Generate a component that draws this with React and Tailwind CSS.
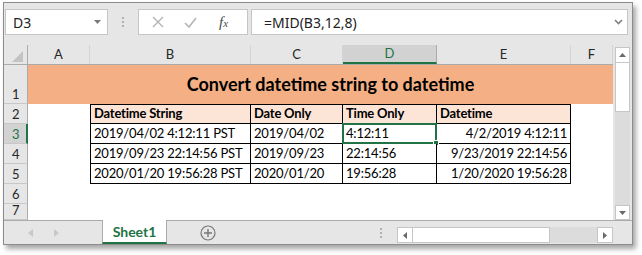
import React from 'react';

const cellFont = "font-['Lato','Liberation_Sans',sans-serif]";
const uiFont = "font-['Noto_Sans','Open_Sans',sans-serif]";
const txt = 'text-[13px] tracking-[-0.2px] whitespace-nowrap';

const cols = [
  { key: 'A', w: 'w-[62px]' },
  { key: 'B', w: 'w-[161px]' },
  { key: 'C', w: 'w-[92px]' },
  { key: 'D', w: 'w-[94px]' },
  { key: 'E', w: 'w-[134px]' },
  { key: 'F', w: 'w-[42px]' },
];

const rows = [
  ['2019/04/02 4:12:11 PST', '2019/04/02', '4:12:11', '4/2/2019 4:12:11'],
  ['2019/09/23 22:14:56 PST', '2019/09/23', '22:14:56', '9/23/2019 22:14:56'],
  ['2020/01/20 19:56:28 PST', '2020/01/20', '19:56:28', '1/20/2020 19:56:28'],
];

function RowHeader({ n, h, active }) {
  return (
    <div
      className={`w-[24px] shrink-0 ${h} border-b border-[#c8c8c8] flex items-end pl-[8px] pb-[2px] text-[13px] leading-none ${cellFont} ${
        active ? 'bg-[#d2d2d2] text-[#217346] border-r-2 border-r-[#217346]' : 'border-r border-r-[#ababab] text-[#262626]'
      }`}
    >
      {n}
    </div>
  );
}

function DataRow({ r, i }) {
  const selected = i === 0;
  return (
    <div className="flex h-[20px]">
      <RowHeader n={i + 3} h="h-[20px]" active={selected} />
      <div className="w-[62px] shrink-0 bg-white" />
      <div className={`w-[161px] shrink-0 bg-white border-l border-r border-b border-black pl-[3px] flex items-center text-black ${txt} ${cellFont}`}>
        {r[0]}
      </div>
      <div className={`w-[92px] shrink-0 bg-white border-r border-b border-black pl-[3px] flex items-center text-black ${txt} ${cellFont}`}>
        {r[1]}
      </div>
      <div className={`relative w-[94px] shrink-0 bg-white border-r border-b border-black pl-[3px] flex items-center text-black ${txt} ${cellFont}`}>
        {r[2]}
        {selected && (
          <>
            <div className="absolute -left-[1px] -top-[1px] -right-[1px] -bottom-[1px] border-2 border-[#217346]" />
            <div className="absolute -right-[3px] -bottom-[3px] w-[6px] h-[6px] bg-[#217346] border border-white" />
          </>
        )}
      </div>
      <div className={`w-[134px] shrink-0 bg-white border-r border-b border-black pr-[3px] flex items-center justify-end text-black ${txt} ${cellFont}`}>
        {r[3]}
      </div>
      <div className="w-[42px] shrink-0 bg-white" />
    </div>
  );
}

function EmptyRow({ n, h }) {
  return (
    <div className={`flex ${h} shrink-0`}>
      <RowHeader n={n} h={h} />
      <div className="w-[585px] bg-white" />
    </div>
  );
}

export default function App() {
  return (
    <div className="w-[642px] h-[255px] bg-white pl-[3px] pt-[2px]">
      <div className="w-[630px] h-[243px] border border-[#8c8c8c] bg-[#e6e6e6] shadow-[3px_4px_5px_rgba(0,0,0,0.35)] flex flex-col">
        {/* formula bar */}
        <div className="h-[42px] flex items-start pt-[6px] pl-[1px] shrink-0">
          <div className={`w-[103px] h-[26px] bg-white border border-[#c6c6c6] flex items-center justify-between pl-[7px] pr-[6px] text-[14px] text-[#222] ${uiFont}`}>
            D3
            <svg width="7" height="4" viewBox="0 0 7 4"><path d="M0 0h7L3.5 4z" fill="#7a7a7a" /></svg>
          </div>
          <div className="w-[30px] h-[26px] flex flex-col items-center justify-center gap-[2px]">
            <div className="w-[2px] h-[2px] bg-[#b0b0b0]" />
            <div className="w-[2px] h-[2px] bg-[#b0b0b0]" />
            <div className="w-[2px] h-[2px] bg-[#b0b0b0]" />
          </div>
          <div className="w-[110px] h-[26px] bg-white border border-[#c6c6c6] flex items-center pl-[13px]">
            <svg width="12" height="12" viewBox="0 0 12 12">
              <path d="M1 1l10 10M11 1L1 11" stroke="#b4b4b4" strokeWidth="1.4" />
            </svg>
            <svg className="ml-[20px]" width="13" height="11" viewBox="0 0 13 11">
              <path d="M1 6l4 4 7-9" stroke="#b4b4b4" strokeWidth="1.6" fill="none" />
            </svg>
            <span className="ml-[22px] font-['Liberation_Serif',serif] italic text-[15px] text-[#4a4a4a] leading-none">
              f<span className="text-[11px]">x</span>
            </span>
          </div>
          <div className={`ml-[3px] w-[377px] h-[26px] bg-white border border-[#c6c6c6] flex items-center justify-between pl-[12px] pr-[4px] text-[14px] text-[#222] ${uiFont}`}>
            =MID(B3,12,8)
            <svg width="9" height="6" viewBox="0 0 9 6">
              <path d="M1 1l3.5 3.5L8 1" stroke="#808080" strokeWidth="1.6" fill="none" />
            </svg>
          </div>
        </div>

        {/* grid + vertical scrollbar */}
        <div className="h-[175px] flex shrink-0">
          <div className="w-[609px] flex flex-col overflow-hidden">
            {/* column headers */}
            <div className="flex h-[20px] shrink-0 border-b border-[#ababab]">
              <div className="w-[24px] shrink-0 border-r border-[#ababab] flex items-end justify-end pr-[4px] pb-[2px]">
                <svg width="11" height="11" viewBox="0 0 11 11"><path d="M11 0v11H0z" fill="#c3c3c3" /></svg>
              </div>
              {cols.map(c => (
                <div
                  key={c.key}
                  className={`${c.w} shrink-0 flex items-center justify-center text-[13px] ${cellFont} ${
                    c.key === 'D'
                      ? 'bg-[#d2d2d2] text-[#217346] border-b-2 border-[#217346] border-r border-r-[#ababab]'
                      : 'text-[#262626] border-r border-[#d4d4d4]'
                  }`}
                >
                  {c.key}
                </div>
              ))}
            </div>

            {/* row 1: title */}
            <div className="flex h-[39px] shrink-0">
              <RowHeader n={1} h="h-[39px]" />
              <div className={`w-[585px] bg-[#f4b084] flex items-center justify-center pl-[20px] text-[18px] font-bold text-black whitespace-nowrap ${cellFont}`}>
                Convert datetime string to datetime
              </div>
            </div>

            {/* row 2: table header */}
            <div className="flex h-[20px] shrink-0">
              <RowHeader n={2} h="h-[20px]" />
              <div className="w-[62px] shrink-0 bg-white" />
              {[
                ['Datetime String', 'w-[161px] border-l'],
                ['Date Only', 'w-[92px]'],
                ['Time Only', 'w-[94px]'],
                ['Datetime', 'w-[134px]'],
              ].map(([t, w]) => (
                <div
                  key={t}
                  className={`${w} shrink-0 bg-[#fce4d6] border-t border-r border-b border-black pl-[3px] flex items-center font-bold text-black ${txt} ${cellFont}`}
                >
                  {t}
                </div>
              ))}
              <div className="w-[42px] shrink-0 bg-white" />
            </div>

            {rows.map((r, i) => (
              <DataRow key={i} r={r} i={i} />
            ))}
            <EmptyRow n={6} h="h-[20px]" />
            <EmptyRow n={7} h="h-[16px]" />
          </div>

          {/* vertical scrollbar */}
          <div className="w-[19px] pl-[2px] pr-[2px] flex flex-col bg-[#e6e6e6]">
            <div className="mt-[2px] h-[16px] bg-white border border-[#c6c6c6] flex items-center justify-center">
              <svg width="7" height="4" viewBox="0 0 7 4"><path d="M0 4h7L3.5 0z" fill="#6a6a6a" /></svg>
            </div>
            <div className="h-[49px] bg-white border border-[#c6c6c6] border-t-0" />
            <div className="flex-1 bg-[#dcdcdc]" />
            <div className="h-[15px] bg-white border border-[#c6c6c6] flex items-center justify-center">
              <svg width="7" height="4" viewBox="0 0 7 4"><path d="M0 0h7L3.5 4z" fill="#6a6a6a" /></svg>
            </div>
          </div>
        </div>

        {/* sheet tabs */}
        <div className="h-[24px] border-t border-[#ababab] flex items-start shrink-0">
          <div className="w-[98px] h-full flex items-center pl-[24px] gap-[21px]">
            <svg width="5" height="8" viewBox="0 0 5 8"><path d="M5 0v8L0 4z" fill="#c8c8c8" /></svg>
            <svg width="5" height="8" viewBox="0 0 5 8"><path d="M0 0v8l5-4z" fill="#c8c8c8" /></svg>
          </div>
          <div className={`-mt-[1px] w-[65px] h-[24px] bg-white border-l border-r border-[#ababab] border-b-2 border-b-[#217346] flex items-center justify-center text-[14px] font-bold text-[#217346] ${cellFont}`}>
            Sheet1
          </div>
          <div className="ml-[33px] h-full flex items-center">
            <svg width="16" height="16" viewBox="0 0 16 16">
              <circle cx="8" cy="8" r="7" stroke="#777" strokeWidth="1.2" fill="none" />
              <path d="M8 4v8M4 8h8" stroke="#777" strokeWidth="1.4" />
            </svg>
          </div>
          <div className="ml-[164px] h-full flex flex-col items-center justify-center gap-[2px]">
            <div className="w-[2px] h-[2px] bg-[#b0b0b0]" />
            <div className="w-[2px] h-[2px] bg-[#b0b0b0]" />
            <div className="w-[2px] h-[2px] bg-[#b0b0b0]" />
          </div>
          <div className="ml-[15px] mt-[6px] h-[16px] flex">
            <div className="w-[16px] h-[16px] bg-white border border-[#c6c6c6] flex items-center justify-center">
              <svg width="4" height="7" viewBox="0 0 4 7"><path d="M4 0v7L0 3.5z" fill="#6a6a6a" /></svg>
            </div>
            <div className="w-[137px] h-[16px] bg-white border border-[#c6c6c6] border-l-0" />
            <div className="w-[47px] h-[16px] bg-[#dcdcdc]" />
            <div className="w-[16px] h-[16px] bg-white border border-[#c6c6c6] flex items-center justify-center">
              <svg width="4" height="7" viewBox="0 0 4 7"><path d="M0 0v7l4-3.5z" fill="#6a6a6a" /></svg>
            </div>
          </div>
        </div>
      </div>
    </div>
  );
}
